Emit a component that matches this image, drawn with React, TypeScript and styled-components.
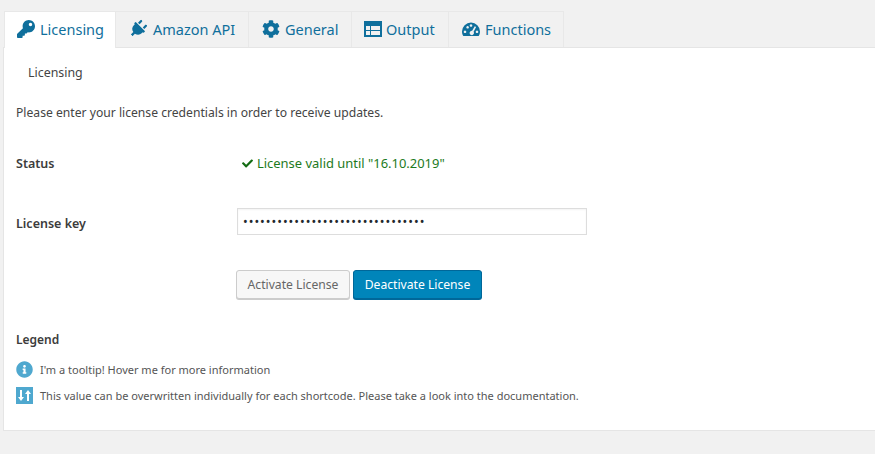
import React from 'react';
import styled, { createGlobalStyle } from 'styled-components';
import { FaKey, FaPlug, FaCog, FaCheck, FaInfoCircle } from 'react-icons/fa';

const GlobalStyle = createGlobalStyle`
  html, body {
    margin: 0;
    padding: 0;
    background: #f1f1f1;
    overflow: hidden;
  }
  body {
    font-family: "Noto Sans", "Open Sans", sans-serif;
    font-size: 12.15px;
    color: #444444;
  }
`;

const Page = styled.div`
  width: 875px;
  height: 454px;
  padding: 11px 0 0 3px;
  box-sizing: border-box;
`;

const TabBar = styled.div`
  display: flex;
  height: 36px;
  padding-left: 1px;
`;

const Tab = styled.div<{ $active?: boolean; $width: number; $pad: number; $gap: number }>`
  display: flex;
  align-items: center;
  gap: ${(p) => p.$gap}px;
  box-sizing: border-box;
  width: ${(p) => p.$width}px;
  height: ${(p) => (p.$active ? 37 : 36)}px;
  padding: 0 0 ${(p) => (p.$active ? 3 : 2)}px ${(p) => p.$pad}px;
  background: ${(p) => (p.$active ? '#ffffff' : '#f1f1f1')};
  border: 1px solid #e8e8e8;
  border-bottom: none;
  border-left-width: ${(p) => (p.$active ? 1 : 0)}px;
  color: #0f6f9c;
  font-size: 14.5px;
  position: relative;
  z-index: ${(p) => (p.$active ? 1 : 0)};

  svg {
    width: 18px;
    height: 18px;
    flex: none;
  }
`;

const PlugIcon = styled(FaPlug)`
  transform: rotate(45deg);
`;

const Panel = styled.div`
  box-sizing: border-box;
  height: 384px;
  background: #ffffff;
  border: 1px solid #e5e5e5;
  border-right: none;
  padding: 15px 0 0 12px;
`;

const SubTab = styled.div`
  padding-left: 12px;
  height: 20px;
  line-height: 20px;
  font-size: 12.4px;
`;

const Intro = styled.p`
  margin: 20px 0 0;
  line-height: 20px;
`;

const FormRow = styled.div<{ $top: number }>`
  display: grid;
  grid-template-columns: 221px 350px;
  align-items: center;
  margin-top: ${(p) => p.$top}px;
`;

const Label = styled.div<{ $drop?: number }>`
  font-weight: 600;
  font-size: 12.5px;
  color: #3c3c3c;
  padding-top: ${(p) => p.$drop ?? 0}px;
`;

const Status = styled.div`
  display: flex;
  align-items: center;
  gap: 4px;
  padding-left: 5px;
  font-size: 12.95px;
  color: #1d7a1d;
  line-height: 20px;

  svg {
    width: 11px;
    height: 11px;
    color: #146c14;
  }
`;

const KeyInput = styled.input`
  box-sizing: border-box;
  width: 350px;
  height: 27px;
  padding: 0 5px;
  border: 1px solid #dddddd;
  box-shadow: inset 0 1px 2px rgba(0, 0, 0, 0.05);
  background: #ffffff;
  color: #23282d;
  font-family: "Noto Sans", sans-serif;
  font-size: 12.5px;
  letter-spacing: 1px;
  outline: none;
`;

const Actions = styled.div`
  display: flex;
  gap: 3px;
  margin: 35px 0 0 220px;
`;

const Button = styled.div<{ $primary?: boolean }>`
  display: flex;
  align-items: center;
  justify-content: center;
  box-sizing: border-box;
  height: 29px;
  width: ${(p) => (p.$primary ? 129 : 114)}px;
  border-radius: 3px;
  border: 1px solid ${(p) => (p.$primary ? '#006799' : '#cccccc')};
  background: ${(p) => (p.$primary ? '#0085ba' : '#f7f7f7')};
  color: ${(p) => (p.$primary ? '#ffffff' : '#666666')};
  box-shadow: 0 1px 0 ${(p) => (p.$primary ? '#006799' : '#cccccc')};
`;

const LegendTitle = styled.div`
  margin-top: 31px;
  font-weight: 600;
  font-size: 12px;
  line-height: 20px;
  color: #3c3c3c;
`;

const LegendRow = styled.div<{ $top: number }>`
  display: flex;
  align-items: center;
  gap: 7px;
  margin-top: ${(p) => p.$top}px;
  height: 18px;
  font-size: 11px;
  color: #555555;

  svg {
    width: 17px;
    height: 17px;
    flex: none;
    color: #4fa8cf;
  }
`;

const OutputIcon = () => (
  <svg viewBox="0 0 18 18" fill="currentColor">
    <path
      fillRule="evenodd"
      d="M0 1h18v16H0zM2 6v4h4V6zM7 6v4h9V6zM2 11v4h4v-4zM7 11v4h9v-4z"
    />
  </svg>
);

const GaugeIcon = () => (
  <svg viewBox="0 0 18 18" fill="currentColor">
    <path
      fillRule="evenodd"
      d="M0 11.5a9 9 0 0 1 18 0c0 1.7-.5 3.2-1.3 4.500H1.300C.5 14.700 0 13.200 0 11.500zM3 10.500a1.300 1.300 0 1 0 .01 0zM5.600 6a1.300 1.300 0 1 0 .01 0zM9 4.200a1.300 1.300 0 1 0 .01 0zM15 10.500a1.300 1.300 0 1 0 .01 0zM12.800 6.200l-2.700 4.600a2.200 2.200 0 1 0 1.500.9l2.500-4.700z"
    />
  </svg>
);

const OverrideIcon = () => (
  <svg viewBox="0 0 17 17" fill="currentColor">
    <path
      fillRule="evenodd"
      d="M0 0h17v17H0zM4 3v7H2l3 4 3-4H6V3zM11 14v-7H9l3-4 3 4h-2v7z"
    />
  </svg>
);

const tabs = [
  { label: 'Licensing', icon: <FaKey />, width: 112, pad: 12, gap: 5, active: true },
  { label: 'Amazon API', icon: <PlugIcon />, width: 133, pad: 13, gap: 6 },
  { label: 'General', icon: <FaCog />, width: 103, pad: 13, gap: 5 },
  { label: 'Output', icon: <OutputIcon />, width: 97, pad: 12, gap: 4 },
  { label: 'Functions', icon: <GaugeIcon />, width: 115, pad: 13, gap: 5 },
];

export default function App() {
  return (
    <Page>
      <GlobalStyle />
      <TabBar>
        {tabs.map((t) => (
          <Tab key={t.label} $active={t.active} $width={t.width} $pad={t.pad} $gap={t.gap}>
            {t.icon}
            {t.label}
          </Tab>
        ))}
      </TabBar>
      <Panel>
        <SubTab>Licensing</SubTab>
        <Intro>Please enter your license credentials in order to receive updates.</Intro>
        <FormRow $top={30}>
          <Label>Status</Label>
          <Status>
            <FaCheck />
            License valid until "16.10.2019"
          </Status>
        </FormRow>
        <FormRow $top={35}>
          <Label $drop={3}>License key</Label>
          <KeyInput type="password" readOnly value="12345678901234567890123456789012" />
        </FormRow>
        <Actions>
          <Button>Activate License</Button>
          <Button $primary>Deactivate License</Button>
        </Actions>
        <LegendTitle>Legend</LegendTitle>
        <LegendRow $top={10}>
          <FaInfoCircle />
          I'm a tooltip! Hover me for more information
        </LegendRow>
        <LegendRow $top={8}>
          <OverrideIcon />
          This value can be overwritten individually for each shortcode. Please take a look into the documentation.
        </LegendRow>
      </Panel>
    </Page>
  );
}
